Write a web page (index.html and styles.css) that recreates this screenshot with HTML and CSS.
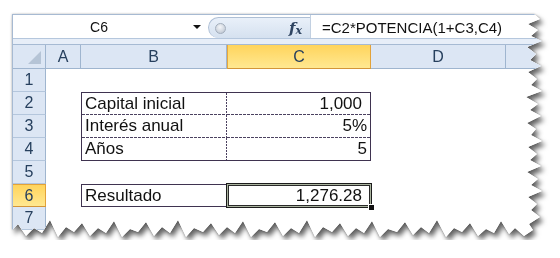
FILE: index.html
```html
<!DOCTYPE html>
<html lang="es">
<head>
<meta charset="utf-8">
<title>Resultado</title>
<link rel="stylesheet" href="styles.css">
</head>
<body>
<div class="page">
  <div class="frame">
    <div class="sheet">
      <div class="fbar">
        <div class="namebox">
          <span class="nbtext">C6</span>
          <span class="arrow"></span>
        </div>
        <div class="pill">
          <span class="knob"></span>
          <span class="fx"><span class="fx-f">f</span><span class="fx-x">x</span></span>
        </div>
        <div class="formula">=C2*POTENCIA(1+C3,C4)</div>
      </div>
      <div class="band"></div>
      <div class="grid">
        <div class="corner"><span class="tri"></span></div>
        <div class="ch">A</div>
        <div class="ch">B</div>
        <div class="ch sel">C</div>
        <div class="ch">D</div>
        <div class="ch last"></div>

        <div class="rh r1">1</div>
        <div class="rh r2">2</div>
        <div class="rh r3">3</div>
        <div class="rh r4">4</div>
        <div class="rh r5">5</div>
        <div class="rh r6 sel">6</div>
        <div class="rh r7">7</div>

        <div class="cell b2">Capital inicial</div>
        <div class="cell c2 num pad">1,000</div>
        <div class="cell b3">Interés anual</div>
        <div class="cell c3 num">5%</div>
        <div class="cell b4">Años</div>
        <div class="cell c4 num">5</div>

        <div class="cell b6">Resultado</div>
        <div class="cell c6 num">1,276.28<span class="handle"></span></div>
      </div>
    </div>
  </div>
</div>
</body>
</html>
```
FILE: styles.css
```css
* { box-sizing: border-box; margin: 0; padding: 0; }
html, body { background: #fff; }
body { margin: 0; font-family: "Liberation Sans", Arial, sans-serif; color: #111; }

.page { padding: 14px 0 0 12px; }
.frame {
  width: 535px;
  height: 226px;
  filter: drop-shadow(0 0 1px rgba(0,0,0,0.25)) drop-shadow(3px 4px 2.5px rgba(0,0,0,0.6));
}
.sheet {
  width: 100%;
  height: 100%;
  background: #fff;
  border-left: 1px solid #a7bad2;
  border-top: 1px solid #a7bad2;
  display: flex;
  flex-direction: column;
  overflow: hidden;
  clip-path: polygon(0 0, 522px 0, 528px 5px, 516px 10px, 526px 16px, 519px 22px, 530px 27px, 515px 33px, 524px 40px, 518px 46px, 529px 52px, 516px 58px, 525px 65px, 519px 71px, 530px 77px, 514px 83px, 526px 90px, 518px 96px, 529px 102px, 515px 109px, 524px 115px, 519px 121px, 530px 127px, 516px 133px, 525px 140px, 518px 146px, 529px 152px, 515px 158px, 526px 165px, 519px 171px, 530px 177px, 516px 183px, 525px 190px, 519px 196px, 528px 203px, 517px 210px, 521px 216px,
    512px 222px, 503px 214px, 497px 220px, 489px 207px, 482px 219px, 474px 215px, 466px 222px, 458px 209px, 450px 218px, 442px 214px, 434px 223px, 425px 206px, 417px 219px, 409px 213px, 401px 221px, 393px 208px, 385px 218px, 376px 215px, 368px 223px, 360px 207px, 352px 219px, 344px 214px, 336px 222px, 328px 209px, 320px 218px, 311px 213px, 303px 223px, 295px 206px, 287px 219px, 279px 214px, 271px 222px, 263px 208px, 255px 218px, 247px 215px, 239px 223px, 231px 207px, 223px 219px, 215px 213px, 207px 221px, 199px 209px, 191px 218px, 182px 214px, 174px 223px, 166px 206px, 158px 219px, 150px 213px, 142px 222px, 134px 208px, 126px 218px, 118px 215px, 110px 223px, 102px 207px, 94px 219px, 86px 214px, 78px 222px, 70px 209px, 62px 218px, 54px 213px, 46px 223px, 38px 206px, 30px 219px, 22px 214px, 14px 222px, 6px 210px, 0 216px);
}

/* formula bar */
.fbar {
  display: flex;
  height: 23px;
  flex: 0 0 23px;
  background: #fff;
}
.namebox {
  display: flex;
  align-items: center;
  width: 195px;
  flex: 0 0 195px;
}
.nbtext {
  width: 172px;
  text-align: center;
  font-size: 14px;
  color: #111;
  padding-top: 1px;
}
.arrow {
  margin-left: 8px;
  width: 0;
  height: 0;
  border-left: 4px solid transparent;
  border-right: 4px solid transparent;
  border-top: 4px solid #111;
}
.pill {
  display: flex;
  align-items: center;
  justify-content: space-between;
  width: 102px;
  flex: 0 0 102px;
  height: 21px;
  margin-top: 2px;
  border: 1px solid #aebfd5;
  border-right: 0;
  border-bottom: 0;
  border-radius: 11px 0 0 11px;
  background: linear-gradient(#e9f0f9, #d5e1ef);
  padding: 0 8px 0 6px;
}
.knob {
  width: 11px;
  height: 11px;
  border-radius: 50%;
  border: 1px solid #a3aebc;
  background: radial-gradient(circle at 45% 35%, #f4f6f9 0, #c9d0da 70%, #aeb8c6 100%);
}
.fx {
  font-family: "DejaVu Serif", "Liberation Serif", serif;
  font-style: italic;
  font-weight: bold;
  color: #2f4461;
  line-height: 1;
}
.fx-f { font-size: 15px; }
.fx-x { font-size: 11px; position: relative; top: 1px; }
.formula {
  flex: 1;
  border-left: 1px solid #c2d0e1;
  padding-left: 11px;
  font-size: 15px;
  line-height: 23px;
  padding-top: 1px;
  color: #111;
  white-space: nowrap;
}
.band {
  height: 7px;
  flex: 0 0 7px;
  background: #e7eef8;
  border-top: 1px solid #b5c7dd;
  border-bottom: 1px solid #a6bad3;
}

/* grid */
.grid {
  display: grid;
  grid-template-columns: 33px 35px 146px 144px 135px 1fr;
  grid-template-rows: 24px repeat(7, 23px);
  flex: 1;
  background: #fff;
}
.corner {
  background: #dce6f4;
  border-right: 1px solid #9fb5cf;
  border-bottom: 1px solid #9fb5cf;
  display: flex;
  align-items: flex-end;
  justify-content: flex-end;
  padding: 0 4px 4px 0;
}
.tri {
  width: 0;
  height: 0;
  border-left: 13px solid transparent;
  border-bottom: 13px solid #b5c4d6;
}
.ch {
  background: #dce6f4;
  border-right: 1px solid #9fb5cf;
  border-bottom: 1px solid #9fb5cf;
  text-align: center;
  font-size: 16px;
  line-height: 23px;
  color: #27405e;
}
.ch.sel {
  background: linear-gradient(#ffd45c, #ffe891);
  border-left: 1px solid #e8a83c;
  border-right: 1px solid #e2a23a;
  border-bottom: 1px solid #d39538;
}
.ch.last { border-right: 0; }

.rh {
  grid-column: 1;
  background: #dce6f4;
  border-right: 1px solid #9fb5cf;
  border-bottom: 1px solid #b4c6dc;
  text-align: center;
  font-size: 16px;
  line-height: 22px;
  color: #27405e;
}
.rh.sel {
  background: linear-gradient(#ffd45c, #ffe891);
  border-top: 1px solid #e2a23a;
  border-right: 1px solid #e2a23a;
  border-bottom: 1px solid #d39538;
  line-height: 21px;
}
.r1 { grid-row: 2; }
.r2 { grid-row: 3; }
.r3 { grid-row: 4; }
.r4 { grid-row: 5; }
.r5 { grid-row: 6; }
.r6 { grid-row: 7; }
.r7 { grid-row: 8; }

.cell {
  font-size: 17px;
  line-height: 22px;
  padding: 0 3px;
  color: #111;
  white-space: nowrap;
  background-repeat: no-repeat;
}
.num { text-align: right; padding-right: 3px; }
.num.pad { padding-right: 8px; }

.b2, .b3, .b4 {
  grid-column: 3;
  border-left: 1px solid #3f3350;
  background-image:
    repeating-linear-gradient(90deg, #4b4160 0 3px, transparent 3px 4px),
    repeating-linear-gradient(180deg, #4b4160 0 2px, transparent 2px 3px);
  background-size: 100% 1px, 1px 100%;
  background-position: left bottom, right top;
}
.c2, .c3, .c4 {
  grid-column: 4;
  border-right: 1px solid #3f3350;
  background-image: repeating-linear-gradient(90deg, #4b4160 0 3px, transparent 3px 4px);
  background-size: 100% 1px;
  background-position: left bottom;
}
.b2, .c2 { grid-row: 3; border-top: 1px solid #3f3350; line-height: 21px; }
.b3, .c3 { grid-row: 4; }
.b4, .c4 { grid-row: 5; border-bottom: 1px solid #3f3350; background-size: 0 0, 1px 100%; }
.c4 { background-image: none; }

.b6 {
  grid-column: 3;
  grid-row: 7;
  border: 1px solid #3f3350;
  border-right: 0;
  line-height: 21px;
}
.c6 {
  grid-column: 4;
  grid-row: 7;
  position: relative;
  margin: -1px;
  border: 1px solid #1c1c1c;
  box-shadow: inset 0 0 0 1px #aab49f, inset 0 0 0 2px #2a2a2a;
  padding-right: 9px;
  line-height: 23px;
}
.handle {
  position: absolute;
  right: -4px;
  bottom: -4px;
  width: 7px;
  height: 7px;
  background: #111;
  border: 1px solid #fff;
}
```
